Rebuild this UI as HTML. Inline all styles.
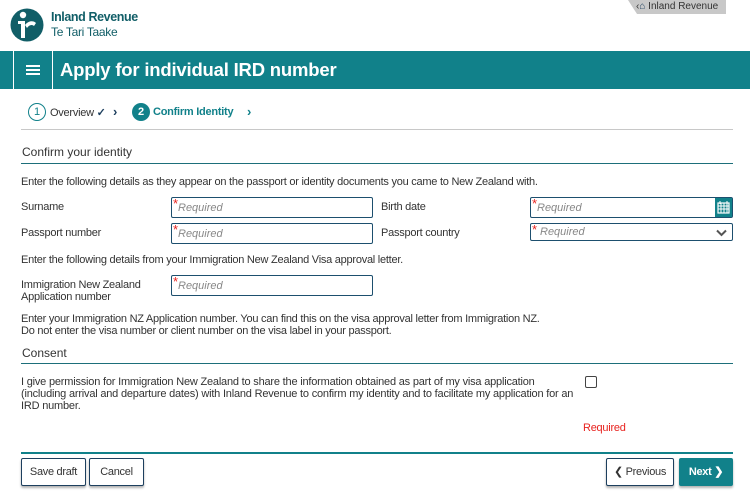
<!DOCTYPE html>
<html><head><style>
*{margin:0;padding:0;box-sizing:border-box}
body{width:750px;height:497px;background:#fff;font-family:"Liberation Sans",Arial,sans-serif;color:#333;position:relative;overflow:hidden;font-size:11px}
.a{position:absolute;white-space:nowrap}
.t{letter-spacing:-0.25px}
.inp{position:absolute;height:21px;border:1px solid #1d4f6e;border-radius:2px;background:#fff}
.inp .st{position:absolute;left:1px;top:-2px;color:#e8231f;font-size:13px}
.inp .ph{position:absolute;left:6px;top:4px;color:#888;font-style:italic;font-size:11px}
.btn{position:absolute;top:458px;height:28px;border:1px solid #1d3f5e;border-radius:2px;background:#fff;font-size:11px;color:#333;text-align:center;line-height:26px;box-shadow:0 2px 2px rgba(0,0,0,.3);letter-spacing:-0.3px}
</style></head><body>
<svg class="a" style="left:10px;top:8px" width="34" height="34" viewBox="0 0 34 34">
<circle cx="17" cy="17" r="16.5" fill="#115e67"/>
<circle cx="13" cy="7" r="3.2" fill="#fff"/>
<path d="M8 13h7v17h-4V16H8z" fill="#fff"/>
<path d="M15 17c3-4 8-5 11-2l-2 3c-2-2-5-1-7 2z" fill="#fff"/>
</svg>
<div class="a" style="left:51px;top:10px;font-size:12.5px;font-weight:bold;color:#115e67;letter-spacing:-0.4px">Inland Revenue</div>
<div class="a" style="left:51px;top:25px;font-size:12px;color:#115e67;letter-spacing:-0.3px">Te Tari Taake</div>
<div class="a" style="left:628px;top:0;width:98px;height:14px;background:#c8c8c8;clip-path:polygon(0 0,100% 0,100% 100%,9px 100%);font-size:10px;color:#333;line-height:13px;padding-left:8px">&#x2039;<span style="color:#1d3f5e">&#8962;</span> Inland Revenue</div>
<div class="a" style="left:0;top:51px;width:750px;height:38px;background:#11818a"></div>
<div class="a" style="left:13px;top:51px;width:1px;height:38px;background:#fff"></div>
<div class="a" style="left:52px;top:51px;width:1px;height:38px;background:#fff"></div>
<div class="a" style="left:26px;top:65px;width:14px;height:2px;background:#fff;box-shadow:0 4px 0 #fff,0 8px 0 #fff"></div>
<div class="a" style="left:60px;top:59px;font-size:18.5px;font-weight:bold;color:#fff;letter-spacing:-0.2px">Apply for individual IRD number</div>
<div class="a" style="left:28px;top:103px;width:18px;height:18px;border:1.5px solid #11818a;border-radius:50%;font-size:11px;text-align:center;line-height:16px;color:#11818a">1</div>
<div class="a t" style="left:50px;top:106px;color:#333">Overview <b style="color:#1d3f5e">✓</b></div>
<div class="a" style="left:113px;top:104px;font-size:13px;font-weight:bold;color:#1d3f5e">›</div>
<div class="a" style="left:132px;top:103px;width:18px;height:18px;border-radius:50%;background:#11818a;font-size:11px;font-weight:bold;text-align:center;line-height:18px;color:#fff">2</div>
<div class="a t" style="left:153px;top:106px;color:#11818a;font-weight:bold">Confirm Identity</div>
<div class="a" style="left:247px;top:104px;font-size:13px;font-weight:bold;color:#11818a">›</div>
<div class="a" style="left:21px;top:129px;width:712px;height:1px;background:#c8c8c8"></div>
<div class="a" style="left:22px;top:145px;font-size:12px;color:#333">Confirm your identity</div>
<div class="a" style="left:21px;top:163px;width:712px;height:1px;background:#1d6f7a"></div>
<div class="a t" style="left:21px;top:176px">Enter the following details as they appear on the passport or identity documents you came to New Zealand with.</div>
<div class="a t" style="left:21px;top:201px">Surname</div>
<div class="inp" style="left:171px;top:197px;width:202px"><span class="st">*</span><span class="ph">Required</span></div>
<div class="a t" style="left:381px;top:201px">Birth date</div>
<div class="inp" style="left:530px;top:197px;width:203px"><span class="st">*</span><span class="ph">Required</span>
<div style="position:absolute;right:0;top:0;width:17px;height:19px;background:#11818a"><svg width="17" height="19" viewBox="0 0 17 19"><rect x="3" y="5" width="11" height="10" fill="none" stroke="#fff" stroke-width="1.2"/><path d="M3 8h11M3 11h11M6 5v10M9 5v10M12 5v10M5 3v3M12 3v3" stroke="#fff" stroke-width="1"/></svg></div></div>
<div class="a t" style="left:21px;top:227px">Passport number</div>
<div class="inp" style="left:171px;top:223px;width:202px"><span class="st">*</span><span class="ph">Required</span></div>
<div class="a t" style="left:381px;top:227px">Passport country</div>
<div class="inp" style="left:530px;top:223px;width:203px;height:18px"><span class="st">*</span><span class="ph" style="left:9px;top:2px">Required</span>
<svg style="position:absolute;right:5px;top:5px" width="11" height="8" viewBox="0 0 11 8"><path d="M1 1.5l4.5 4.5 4.5-4.5" fill="none" stroke="#555" stroke-width="2"/></svg></div>
<div class="a t" style="left:21px;top:254px">Enter the following details from your Immigration New Zealand Visa approval letter.</div>
<div class="a t" style="left:21px;top:279px;line-height:12px">Immigration New Zealand<br>Application number</div>
<div class="inp" style="left:171px;top:275px;width:202px"><span class="st">*</span><span class="ph">Required</span></div>
<div class="a t" style="left:21px;top:313px;line-height:12px">Enter your Immigration NZ Application number. You can find this on the visa approval letter from Immigration NZ.<br>Do not enter the visa number or client number on the visa label in your passport.</div>
<div class="a" style="left:22px;top:346px;font-size:12px">Consent</div>
<div class="a" style="left:21px;top:363px;width:712px;height:1px;background:#1d6f7a"></div>
<div class="a" style="left:21px;top:376px;line-height:12px;font-size:11px;letter-spacing:-0.2px">I give permission for Immigration New Zealand to share the information obtained as part of my visa application<br>(including arrival and departure dates) with Inland Revenue to confirm my identity and to facilitate my application for an<br>IRD number.</div>
<div class="a" style="left:585px;top:376px;width:12px;height:12px;border:1px solid #444;border-radius:2px"></div>
<div class="a t" style="left:583px;top:422px;color:#e8231f">Required</div>
<div class="a" style="left:21px;top:452px;width:712px;height:2px;background:#11818a"></div>
<div class="btn" style="left:21px;width:65px">Save draft</div>
<div class="btn" style="left:89px;width:55px">Cancel</div>
<div class="btn" style="left:606px;width:68px">&#x276E; Previous</div>
<div class="btn" style="left:679px;width:54px;background:#11818a;border-color:#11818a;color:#fff;font-weight:bold">Next &#x276F;</div>
</body></html>
